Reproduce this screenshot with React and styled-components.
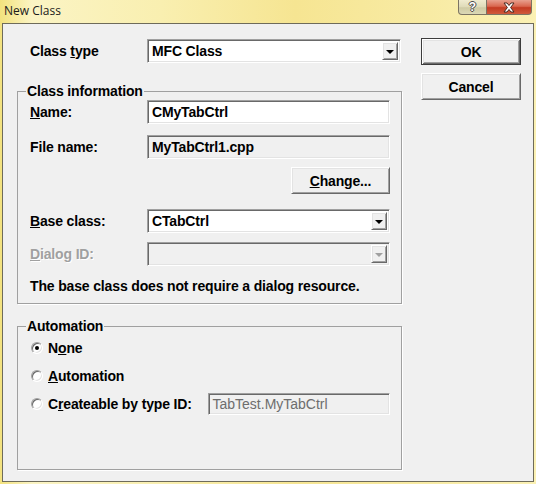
import React from 'react';
import styled, { createGlobalStyle, css } from 'styled-components';

const GlobalStyle = createGlobalStyle`
  html, body {
    margin: 0;
    padding: 0;
  }
  body {
    width: 536px;
    height: 484px;
    overflow: hidden;
    background: #f6ea9c;
  }
`;

const dialogFont = css`
  font-family: "Liberation Sans", Arial, sans-serif;
  font-size: 14px;
  font-weight: bold;
  letter-spacing: -0.15px;
  color: #000;
`;

const sunken = css`
  box-sizing: border-box;
  border: 1px solid;
  border-color: #a0a0a0 #ffffff #ffffff #a0a0a0;
  box-shadow: inset 1px 1px 0 #696969, inset -1px -1px 0 #e3e3e3;
`;

const raised = css`
  box-sizing: border-box;
  border: 1px solid;
  border-color: #ffffff #696969 #696969 #ffffff;
  box-shadow: inset 1px 1px 0 #e3e3e3, inset -1px -1px 0 #a0a0a0;
  background: #f0f0f0;
`;

const Window = styled.div`
  width: 536px;
  height: 484px;
  box-sizing: border-box;
  display: flex;
  flex-direction: column;
  padding: 0 2px 2px 2px;
  background: linear-gradient(90deg, #f3e27e 0%, #fbf4c4 6%, #f9efb0 30%, #f6e592 55%, #f8eba4 80%, #fbf1b4 100%);
`;

const TitleBar = styled.div`
  height: 23px;
  display: flex;
  justify-content: space-between;
  align-items: flex-start;
  margin-right: -2px;
`;

const Title = styled.div`
  font-family: "Open Sans", "Noto Sans", sans-serif;
  font-size: 12px;
  color: #1a1a1a;
  padding: 2px 0 0 2px;
`;

const CaptionButtons = styled.div`
  display: flex;
  margin-right: 4px;
`;

const CaptionButton = styled.div`
  box-sizing: border-box;
  height: 15px;
  width: ${(p) => p.$w}px;
  border: 1px solid #7c7463;
  border-top: none;
  display: flex;
  align-items: center;
  justify-content: center;
  ${(p) =>
    p.$close
      ? css`
          background: linear-gradient(180deg, #e8a08e 0%, #d9674f 45%, #c43b22 55%, #d05a3c 100%);
          border-left: none;
          border-radius: 0 0 4px 0;
        `
      : css`
          background: linear-gradient(180deg, #f0ebcf 0%, #dedab8 50%, #cfcba4 55%, #dcd8b6 100%);
          border-radius: 0 0 0 4px;
        `}
`;

const HelpGlyph = styled.span`
  font-family: "Liberation Sans", Arial, sans-serif;
  font-size: 12px;
  font-weight: bold;
  line-height: 12px;
  color: #fff;
  text-shadow: 1px 0 0 #4a4a4a, -1px 0 0 #4a4a4a, 0 1px 0 #4a4a4a, 0 -1px 0 #4a4a4a;
`;

const Client = styled.div`
  flex: 1;
  display: flex;
  gap: 19px;
  box-sizing: border-box;
  border: 1px solid #6e6b5a;
  background: #f0f0f0;
  padding: 14px 11px 0 14px;
`;

const Main = styled.div`
  width: 385px;
  display: flex;
  flex-direction: column;
`;

const Side = styled.div`
  width: 100px;
  display: flex;
  flex-direction: column;
  gap: 8px;
`;

const Row = styled.div`
  display: grid;
  grid-template-columns: ${(p) => p.$cols || '117px 243px'};
  align-items: center;
  margin-top: ${(p) => p.$top || 0}px;
  padding-left: ${(p) => p.$indent || 0}px;
`;

const Label = styled.label`
  ${dialogFont};
  white-space: nowrap;
  ${(p) =>
    p.$disabled &&
    css`
      color: #a0a0a0;
      text-shadow: 1px 1px 0 #fff;
    `}
`;

const Edit = styled.div`
  ${sunken};
  ${dialogFont};
  height: ${(p) => p.$h || 24}px;
  display: flex;
  align-items: center;
  padding-left: 4px;
  background: ${(p) => (p.$readonly ? '#f0f0f0' : '#ffffff')};
  ${(p) =>
    p.$grey &&
    css`
      color: #6d6d6d;
      font-weight: normal;
      letter-spacing: 0;
    `}
`;

const Combo = styled.div`
  ${sunken};
  height: 24px;
  display: flex;
  align-items: stretch;
  padding: 2px;
  background: ${(p) => (p.$disabled ? '#f0f0f0' : '#ffffff')};
`;

const ComboText = styled.div`
  ${dialogFont};
  flex: 1;
  display: flex;
  align-items: center;
  padding-left: 2px;
`;

const ComboArrow = styled.div`
  ${raised};
  width: 16px;
  display: flex;
  align-items: center;
  justify-content: center;
  &::after {
    content: '';
    border-left: 4px solid transparent;
    border-right: 4px solid transparent;
    border-top: 4px solid ${(p) => (p.$disabled ? '#a0a0a0' : '#000')};
    margin-top: 1px;
  }
`;

const Button = styled.button`
  ${raised};
  ${dialogFont};
  width: ${(p) => p.$w || 100}px;
  height: 27px;
  padding: 0;
  cursor: default;
  ${(p) =>
    p.$default &&
    css`
      outline: 1px solid #3c3c3c;
      outline-offset: -1px;
      border-color: #ffffff #3c3c3c #3c3c3c #ffffff;
      box-shadow: inset 1px 1px 0 #ffffff, inset -1px -1px 0 #696969, inset 2px 2px 0 #e3e3e3, inset -2px -2px 0 #a0a0a0;
    `}
`;

const ButtonRow = styled.div`
  display: flex;
  justify-content: flex-end;
  margin-top: ${(p) => p.$top || 0}px;
`;

const Group = styled.fieldset`
  margin: ${(p) => p.$top}px 0 0 0;
  padding: ${(p) => p.$pad};
  border: 1px solid #a0a0a0;
  box-shadow: 1px 1px 0 #ffffff;
  min-width: 0;
  ${(p) => p.$h && css`height: ${p.$h}px;`}
  box-sizing: border-box;
`;

const Legend = styled.legend`
  ${dialogFont};
  margin-left: -4px;
  padding: 0 1px;
  line-height: 16px;
`;

const Note = styled.div`
  ${dialogFont};
  margin-top: ${(p) => p.$top || 0}px;
  line-height: 16px;
`;

const RadioRow = styled.div`
  display: flex;
  align-items: center;
  height: 22px;
  margin-top: ${(p) => p.$top || 0}px;
`;

const RadioLabel = styled.div`
  display: flex;
  align-items: center;
  gap: 5px;
  width: ${(p) => (p.$w ? `${p.$w}px` : 'auto')};
  padding-left: 1px;
  ${dialogFont};
`;

const RadioDot = styled.span`
  box-sizing: border-box;
  width: 12px;
  height: 12px;
  border-radius: 50%;
  border: 1px solid;
  border-color: #a0a0a0 #ffffff #ffffff #a0a0a0;
  box-shadow: inset 1px 1px 0 #696969, inset -1px -1px 0 #e3e3e3;
  background: #ffffff;
  display: flex;
  align-items: center;
  justify-content: center;
  &::after {
    content: '';
    width: 4px;
    height: 4px;
    border-radius: 50%;
    background: ${(p) => (p.$checked ? '#000' : 'transparent')};
  }
`;

const Radio = ({ checked, children, width }) => (
  <RadioLabel $w={width}>
    <RadioDot $checked={checked} />
    <span>{children}</span>
  </RadioLabel>
);

const CloseIcon = () => (
  <svg width="14" height="11" viewBox="0 0 14 11">
    <path
      d="M2 1 L5 1 L7 3.5 L9 1 L12 1 L8.6 5.5 L12 10 L9 10 L7 7.5 L5 10 L2 10 L5.4 5.5 Z"
      fill="#ffffff"
      stroke="#4a2a22"
      strokeWidth="1"
      strokeLinejoin="round"
    />
  </svg>
);

export default function App() {
  return (
    <>
      <GlobalStyle />
      <Window>
        <TitleBar>
          <Title>New Class</Title>
          <CaptionButtons>
            <CaptionButton $w={29}>
              <HelpGlyph>?</HelpGlyph>
            </CaptionButton>
            <CaptionButton $w={45} $close>
              <CloseIcon />
            </CaptionButton>
          </CaptionButtons>
        </TitleBar>
        <Client>
          <Main>
            <Row $top={1} $indent={13} $cols="117px 254px">
              <Label>
                Class <u>t</u>ype
              </Label>
              <Combo>
                <ComboText>MFC Class</ComboText>
                <ComboArrow />
              </Combo>
            </Row>

            <Group $top={20} $pad="0 11px 9px 12px">
              <Legend>Class information</Legend>
              <Row $top={1}>
                <Label>
                  <u>N</u>ame:
                </Label>
                <Edit>CMyTabCtrl</Edit>
              </Row>
              <Row $top={11}>
                <Label>File name:</Label>
                <Edit $readonly>MyTabCtrl1.cpp</Edit>
              </Row>
              <ButtonRow $top={8}>
                <Button $w={99}>
                  <u>C</u>hange...
                </Button>
              </ButtonRow>
              <Row $top={15}>
                <Label>
                  <u>B</u>ase class:
                </Label>
                <Combo>
                  <ComboText>CTabCtrl</ComboText>
                  <ComboArrow />
                </Combo>
              </Row>
              <Row $top={9}>
                <Label $disabled>
                  <u>D</u>ialog ID:
                </Label>
                <Combo $disabled>
                  <ComboText />
                  <ComboArrow $disabled />
                </Combo>
              </Row>
              <Note $top={12}>The base class does not require a dialog resource.</Note>
            </Group>

            <Group $top={14} $h={152} $pad="3px 11px 0 12px">
              <Legend>Automation</Legend>
              <RadioRow>
                <Radio checked>
                  N<u>o</u>ne
                </Radio>
              </RadioRow>
              <RadioRow $top={6}>
                <Radio>
                  <u>A</u>utomation
                </Radio>
              </RadioRow>
              <RadioRow $top={6}>
                <Radio width={177}>
                  C<u>r</u>eateable by type ID:
                </Radio>
                <Edit $readonly $grey $h={22} style={{ width: 183 }}>
                  TabTest.MyTabCtrl
                </Edit>
              </RadioRow>
            </Group>
          </Main>
          <Side>
            <Button $default>OK</Button>
            <Button>Cancel</Button>
          </Side>
        </Client>
      </Window>
    </>
  );
}
